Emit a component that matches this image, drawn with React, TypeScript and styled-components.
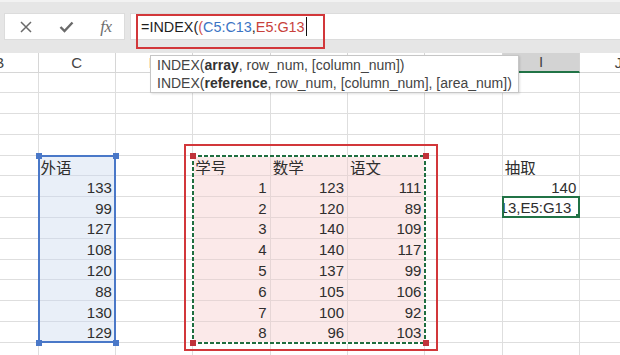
import React from "react";
import styled, { createGlobalStyle } from "styled-components";

const Global = createGlobalStyle`
  html, body { margin: 0; padding: 0; background: #ffffff; }
  body { font-family: "Liberation Sans", "Noto Sans CJK SC", sans-serif; }
`;

const COL_W = 77.4;
const ROW_H = 20.8;
const CJK = `"Liberation Sans", "Noto Sans CJK SC", sans-serif`;

const Screen = styled.div`
  position: relative;
  width: 620px;
  height: 355px;
  overflow: hidden;
  background: #e6e6e6;
  display: flex;
  flex-direction: column;
`;

const TopStrip = styled.div`
  height: 13px;
  flex: none;
  background: #e6e6e6;
  border-top: 2px solid #f2f2f2;
  box-sizing: border-box;
`;

const FormulaRow = styled.div`
  height: 27px;
  flex: none;
  display: flex;
  gap: 5px;
  padding-left: 4px;
`;

const ButtonBox = styled.div`
  width: 121px;
  background: #ffffff;
  border: 1px solid #dcdcdc;
  box-sizing: border-box;
  display: flex;
  align-items: center;
  padding-left: 13px;
  gap: 24px;
`;

const IconSlot = styled.span`
  width: 16px;
  height: 16px;
  display: flex;
  align-items: center;
  justify-content: center;
  color: #6d6d6d;
`;

const Fx = styled.span`
  font-family: "Liberation Serif", serif;
  font-style: italic;
  font-size: 17px;
  color: #6d6d6d;
  line-height: 16px;
  letter-spacing: -0.5px;
`;

const FormulaInput = styled.div`
  flex: 1;
  background: #ffffff;
  border: 1px solid #dcdcdc;
  border-right: none;
  box-sizing: border-box;
  display: flex;
  align-items: center;
  padding-left: 10px;
  font-family: "Liberation Sans", sans-serif;
  font-size: 14.4px;
  color: #1e1e1e;
  white-space: nowrap;
`;

const Tok = styled.span<{ $c?: string }>`
  color: ${(p) => p.$c || "#1e1e1e"};
`;

const Caret = styled.span`
  display: inline-block;
  width: 1px;
  height: 19px;
  background: #111;
  margin-left: 1px;
`;

const Spacer = styled.div`
  height: 12.5px;
  flex: none;
`;

const Sheet = styled.div`
  position: relative;
  flex: 1;
  background: #ffffff;
`;

const Grid = styled.div`
  display: grid;
  grid-template-columns: repeat(9, ${COL_W}px);
  grid-template-rows: 20px repeat(14, ${ROW_H}px);
  margin-left: ${38.5 - COL_W}px;
`;

const HeadCell = styled.div<{ $sel?: boolean }>`
  box-sizing: border-box;
  background: ${(p) => (p.$sel ? "#d3d3d3" : "#ffffff")};
  border-right: 1px solid #d6d6d6;
  border-bottom: ${(p) => (p.$sel ? "2px solid #217346" : "1px solid #d6d6d6")};
  display: flex;
  align-items: center;
  justify-content: center;
  font-family: "Liberation Sans", sans-serif;
  font-size: 15px;
  color: #444;
`;

const Cell = styled.div<{ $fill?: string; $align?: "left" | "right"; $line?: string }>`
  box-sizing: border-box;
  background: ${(p) => p.$fill || "#ffffff"};
  border-right: 1px solid ${(p) => p.$line || "#dedede"};
  border-bottom: 1px solid ${(p) => p.$line || "#dedede"};
  display: flex;
  align-items: center;
  justify-content: ${(p) => (p.$align === "left" ? "flex-start" : "flex-end")};
  padding: 2px 3px 0 2px;
  font-family: ${CJK};
  font-size: 15px;
  color: #2e2e2e;
  white-space: nowrap;
  overflow: hidden;
`;

const Zh = styled.span`
  font-size: 15.5px;
`;

const Selection = styled.div<{ $l: number; $t: number; $w: number; $h: number; $c: string }>`
  position: absolute;
  left: ${(p) => p.$l}px;
  top: ${(p) => p.$t}px;
  width: ${(p) => p.$w}px;
  height: ${(p) => p.$h}px;
  box-sizing: border-box;
  border: 2px solid ${(p) => p.$c};
  pointer-events: none;
`;

const dashH = "repeating-linear-gradient(90deg, #1f6e40 0 4px, #ffffff 4px 6px)";
const dashV = "repeating-linear-gradient(180deg, #1f6e40 0 4px, #ffffff 4px 6px)";

const Ants = styled.div<{ $l: number; $t: number; $w: number; $h: number }>`
  position: absolute;
  left: ${(p) => p.$l}px;
  top: ${(p) => p.$t}px;
  width: ${(p) => p.$w}px;
  height: ${(p) => p.$h}px;
  box-sizing: border-box;
  background: ${dashH} top left / 100% 2px no-repeat,
    ${dashH} bottom left / 100% 2px no-repeat,
    ${dashV} top left / 2px 100% no-repeat,
    ${dashV} top right / 2px 100% no-repeat;
  pointer-events: none;
`;

const Handle = styled.div<{ $x: number; $y: number; $c: string }>`
  position: absolute;
  left: ${(p) => p.$x - 3}px;
  top: ${(p) => p.$y - 3}px;
  width: 6px;
  height: 6px;
  background: ${(p) => p.$c};
`;

const ActiveCell = styled.div<{ $l: number; $t: number; $w: number; $h: number }>`
  position: absolute;
  left: ${(p) => p.$l}px;
  top: ${(p) => p.$t}px;
  width: ${(p) => p.$w}px;
  height: ${(p) => p.$h}px;
  box-sizing: border-box;
  border: 2px solid #217346;
  background: #ffffff;
  display: flex;
  align-items: center;
  justify-content: flex-end;
  overflow: hidden;
  padding: 1px 7px 0 0;
  font-family: "Liberation Sans", sans-serif;
  font-size: 15px;
  color: #2e2e2e;
  white-space: nowrap;
`;

const FillHandle = styled.div`
  position: absolute;
  right: -4px;
  bottom: -4px;
  width: 5px;
  height: 5px;
  background: #217346;
  border: 1px solid #ffffff;
`;

const Tooltip = styled.div`
  position: absolute;
  left: 150px;
  top: 55px;
  width: 369px;
  height: 38px;
  box-sizing: border-box;
  background: #ffffff;
  border: 1px solid #c6c6c6;
  box-shadow: 1px 1px 2px rgba(0, 0, 0, 0.12);
  padding: 1px 0 0 6px;
  font-family: "Liberation Sans", sans-serif;
  font-size: 14px;
  line-height: 17.5px;
  color: #444;
  white-space: nowrap;
`;

const TipLine = styled.div``;

const B = styled.b`
  color: #333;
`;

const RedBox = styled.div<{ $l: number; $t: number; $w: number; $h: number }>`
  position: absolute;
  left: ${(p) => p.$l}px;
  top: ${(p) => p.$t}px;
  width: ${(p) => p.$w}px;
  height: ${(p) => p.$h}px;
  box-sizing: border-box;
  border: 2px solid #d2373a;
  pointer-events: none;
`;

const headers = ["B", "C", "D", "E", "F", "G", "H", "I", "J"];

type CellData = { v: string; zh?: boolean };

const foreign = ["133", "99", "127", "108", "120", "88", "130", "129"];
const nums = ["1", "2", "3", "4", "5", "6", "7", "8"];
const math = ["123", "120", "140", "140", "137", "105", "100", "96"];
const chinese = ["111", "89", "109", "117", "99", "106", "92", "103"];

function cellAt(r: number, c: number): CellData | null {
  const dr = r - 4;
  if (dr < 0 || dr > 8) {
    return null;
  }
  if (c === 1) return dr === 0 ? { v: "外语", zh: true } : { v: foreign[dr - 1] };
  if (c === 3) return dr === 0 ? { v: "学号", zh: true } : { v: nums[dr - 1] };
  if (c === 4) return dr === 0 ? { v: "数学", zh: true } : { v: math[dr - 1] };
  if (c === 5) return dr === 0 ? { v: "语文", zh: true } : { v: chinese[dr - 1] };
  if (c === 7) {
    if (dr === 0) return { v: "抽取", zh: true };
    if (dr === 1) return { v: "140" };
  }
  return null;
}

function fillAt(r: number, c: number): { fill?: string; line?: string } {
  const dr = r - 4;
  if (dr >= 0 && dr <= 8) {
    if (c === 1) return { fill: "#e9eff8", line: "#d5dbe6" };
    if (c >= 3 && c <= 5) return { fill: "#fbe9e9", line: "#e6d6d6" };
  }
  return {};
}

const XIcon = () => (
  <svg width="12" height="12" viewBox="0 0 12 12">
    <path d="M1 1 L11 11 M11 1 L1 11" stroke="#6a6a6a" strokeWidth="1.5" fill="none" />
  </svg>
);

const CheckIcon = () => (
  <svg width="15" height="12" viewBox="0 0 15 12">
    <path d="M1.5 6 L5.5 10 L13.5 1.5" stroke="#6a6a6a" strokeWidth="2.4" fill="none" strokeLinejoin="miter" />
  </svg>
);

export default function App() {
  const body: React.ReactNode[] = [];
  for (let r = 0; r < 14; r++) {
    for (let c = 0; c < 9; c++) {
      const d = cellAt(r, c);
      const f = fillAt(r, c);
      body.push(
        <Cell key={`${r}-${c}`} $fill={f.fill} $line={f.line} $align={d?.zh ? "left" : "right"}>
          {d ? d.zh ? <Zh>{d.v}</Zh> : d.v : null}
        </Cell>
      );
    }
  }

  const bodyTop = 20;
  const colX = (i: number) => 38.5 + (i - 1) * COL_W;
  const rowY = (i: number) => bodyTop + i * ROW_H;

  const bl = colX(1);
  const bt = rowY(4);
  const bw = COL_W;
  const bh = ROW_H * 9;

  const pl = colX(3);
  const pw = COL_W * 3;

  return (
    <>
      <Global />
      <Screen>
        <TopStrip />
        <FormulaRow>
          <ButtonBox>
            <IconSlot>
              <XIcon />
            </IconSlot>
            <IconSlot>
              <CheckIcon />
            </IconSlot>
            <IconSlot>
              <Fx>fx</Fx>
            </IconSlot>
          </ButtonBox>
          <FormulaInput>
            <Tok>=INDEX(</Tok>
            <Tok $c="#d2504a">(</Tok>
            <Tok $c="#3b74c4">C5:C13</Tok>
            <Tok>,</Tok>
            <Tok $c="#c8413b">E5:G13</Tok>
            <Caret />
          </FormulaInput>
        </FormulaRow>
        <Spacer />
        <Sheet>
          <Grid>
            {headers.map((h) => (
              <HeadCell key={h} $sel={h === "I"}>
                {h}
              </HeadCell>
            ))}
            {body}
          </Grid>

          <Selection $l={bl - 1} $t={bt - 1} $w={bw + 1} $h={bh + 1} $c="#4a78c8" />
          <Handle $x={bl} $y={bt} $c="#4a78c8" />
          <Handle $x={bl + bw} $y={bt} $c="#4a78c8" />
          <Handle $x={bl} $y={bt + bh} $c="#4a78c8" />
          <Handle $x={bl + bw} $y={bt + bh} $c="#4a78c8" />

          <Ants $l={pl - 1} $t={bt - 1} $w={pw + 2} $h={bh + 2} />
          <Handle $x={pl} $y={bt} $c="#c0333a" />
          <Handle $x={pl + pw} $y={bt} $c="#c0333a" />
          <Handle $x={pl} $y={bt + bh} $c="#c0333a" />
          <Handle $x={pl + pw} $y={bt + bh} $c="#c0333a" />

          <ActiveCell $l={colX(7) - 1} $t={rowY(6) - 1} $w={COL_W + 1} $h={ROW_H + 1}>
            =INDEX((C5:C13,E5:G13
            <FillHandle />
          </ActiveCell>
        </Sheet>

        <Tooltip>
          <TipLine>
            INDEX(<B>array</B>, row_num, [column_num])
          </TipLine>
          <TipLine>
            INDEX(<B>reference</B>, row_num, [column_num], [area_num])
          </TipLine>
        </Tooltip>

        <RedBox $l={136} $t={14} $w={189} $h={35} />
        <RedBox $l={184} $t={144} $w={254} $h={207} />
      </Screen>
    </>
  );
}
